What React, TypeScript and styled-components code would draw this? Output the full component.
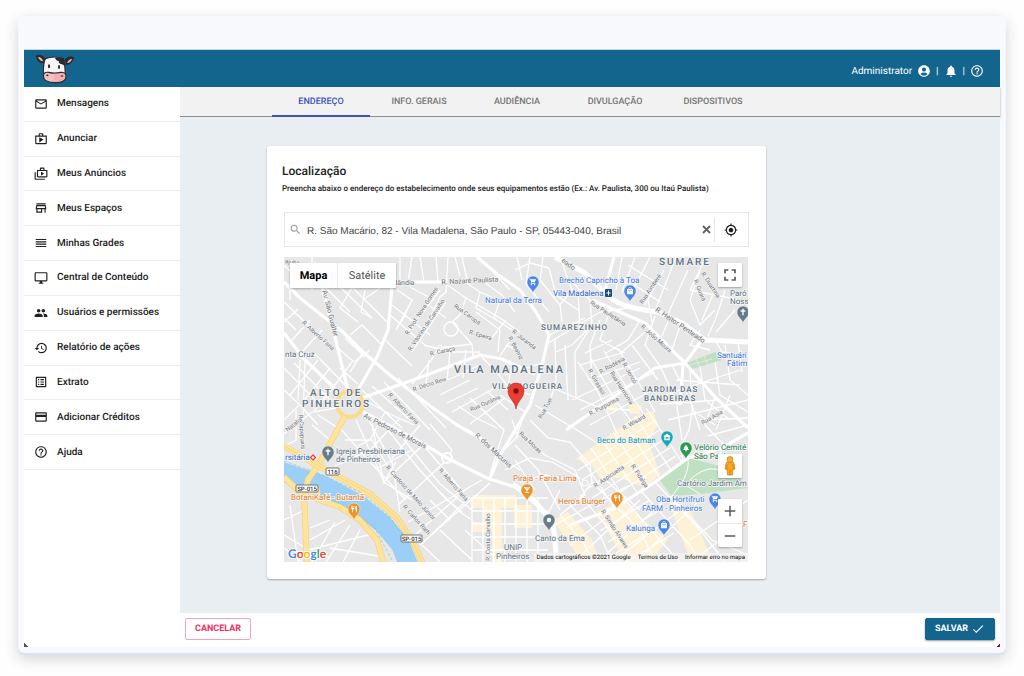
import React from "react";
import styled, { createGlobalStyle, css } from "styled-components";
import type { IconType } from "react-icons";
import {
  MdAccountCircle,
  MdAdd,
  MdDone,
  MdFullscreen,
  MdHelpOutline,
  MdHistory,
  MdLocalBar,
  MdLocalMall,
  MdMailOutline,
  MdMuseum,
  MdMyLocation,
  MdNotifications,
  MdOutlineDesktopWindows,
  MdOutlineListAlt,
  MdOutlineShop,
  MdOutlineShopTwo,
  MdOutlineStore,
  MdPark,
  MdPayment,
  MdPeople,
  MdRemove,
  MdReorder,
  MdRestaurant,
  MdSearch,
  MdShoppingCart,
} from "react-icons/md";

const blue = "#14658e";

const GlobalStyle = createGlobalStyle`
  *, *::before, *::after { box-sizing: border-box; }
  body {
    margin: 0;
    background: #fefefe;
    color: #212121;
    font-family: Roboto, "Liberation Sans", sans-serif;
    font-size: 10px;
    text-rendering: geometricPrecision;
  }
  button, input { font: inherit; color: inherit; text-rendering: inherit; }
  a { color: inherit; text-decoration: none; }
`;

/* ---------- shell ---------- */

const Page = styled.div`
  display: flex;
  min-height: 100vh;
  padding: 16px 18px 21px;
`;

const Frame = styled.div`
  display: flex;
  flex: 1;
  min-width: 0;
  padding: 34px 6px 8px;
  border-radius: 6px;
  background: #f7f9fc;
  box-shadow: inset 0 -2px 1px #d6e2f1, 0 4px 14px rgba(40, 40, 60, 0.2);
`;

const Shell = styled.div`
  position: relative;
  display: flex;
  flex: 1;
  flex-direction: column;
  min-width: 0;
  background: #fff;

  &::before,
  &::after {
    content: "";
    position: absolute;
    z-index: 2;
    bottom: 0;
    width: 4px;
    height: 4px;
  }
  &::before {
    left: 0;
    background: linear-gradient(45deg, #555 50%, transparent 50%);
  }
  &::after {
    right: 0;
    background: linear-gradient(-45deg, #7a2334 50%, transparent 50%);
  }
`;

const Header = styled.header`
  display: flex;
  align-items: center;
  justify-content: space-between;
  height: 37px;
  padding: 0 16px 0 11px;
  background: ${blue};
  box-shadow: 0 -1px 0 #c3d7e8;
  color: #fff;
`;

const Account = styled.div`
  display: flex;
  align-items: center;
  gap: 5px;
  padding-top: 5px;
`;

const IconButton = styled.button`
  display: flex;
  align-items: center;
  justify-content: center;
  padding: 0;
  border: 0;
  background: none;
  cursor: pointer;
`;

const AccountButton = styled(IconButton)`
  gap: 5px;
`;

const Body = styled.div`
  display: flex;
  flex: 1;
  min-height: 0;
`;

const Sidebar = styled.nav`
  position: relative;
  z-index: 1;
  flex: none;
  width: 156px;
  background: #fff;
`;

const Menu = styled.ul`
  display: grid;
  grid-auto-rows: 1fr;
  height: 383px;
  margin: 0;
  padding: 0;
  list-style: none;
`;

const MenuItem = styled.li`
  border-bottom: 1px solid #ececec;
`;

const MenuLink = styled.a`
  display: flex;
  align-items: center;
  gap: 9px;
  height: 100%;
  padding-left: 10px;
  font-weight: 500;
  white-space: nowrap;
`;

const Main = styled.main`
  display: flex;
  flex: 1;
  flex-direction: column;
  min-width: 0;
`;

const Tabs = styled.div`
  display: flex;
  height: 30px;
  padding: 0 92px;
  background: #f2f2f2;
  border-bottom: 1px solid #8d8d90;
  box-shadow: 0 1px 2px rgba(0, 0, 0, 0.35);
`;

const Tab = styled.button<{ $active?: boolean }>`
  width: 98px;
  height: 30px;
  padding: 2px 0 0;
  border: 0;
  border-bottom: 2px solid ${(p) => (p.$active ? "#3f51b5" : "transparent")};
  background: none;
  color: ${(p) => (p.$active ? "#3f51b5" : "#757575")};
  font-size: 9px;
  font-weight: 500;
  cursor: pointer;
`;

const Content = styled.div`
  flex: 1;
  padding: 29px 87px 33px;
  background: #e9eef2;
`;

const Card = styled.section`
  max-width: 499px;
  padding: 16px 15px 17px;
  border-radius: 3px;
  background: #fff;
  box-shadow: 0 1px 2px rgba(0, 0, 0, 0.3);
`;

const Title = styled.h1`
  margin: 0;
  font-size: 12px;
  font-weight: 500;
  line-height: 18px;
`;

const Hint = styled.p`
  margin: 3px 0 18px;
  font-size: 8px;
  font-weight: 500;
  line-height: 11px;
`;

const SearchBox = styled.div`
  display: flex;
  align-items: center;
  height: 35px;
  margin: 0 2px 10px;
  padding: 0 10px 0 4px;
  border: 1px solid #e6e6e6;
  color: #424242;
`;

const SearchInput = styled.input`
  flex: 1;
  min-width: 0;
  padding: 3px 0 0 5px;
  border: 0;
  outline: 0;
  background: none;
  font-family: "Liberation Sans", Arial, sans-serif;
  font-size: 10px;
`;

const LocateButton = styled(IconButton)`
  height: 24px;
  margin-left: 3px;
  padding-left: 9px;
  border-left: 1px solid #e6e6e6;
  color: #212121;
`;

const Footer = styled.footer`
  display: flex;
  align-items: flex-start;
  justify-content: space-between;
  height: 34px;
  padding: 5px 5px 0;
`;

const Action = styled.button<{ $primary?: boolean }>`
  display: flex;
  align-items: center;
  justify-content: center;
  gap: 3px;
  height: 22px;
  padding: 0 9px;
  border: 1px solid #f7a3bd;
  border-radius: 2px;
  background: #fff;
  color: #f02d65;
  font-size: 9px;
  font-weight: 700;
  cursor: pointer;
  ${(p) =>
    p.$primary &&
    css`
      border-color: ${blue};
      background: ${blue};
      color: #fff;
      box-shadow: 0 1px 2px rgba(0, 0, 0, 0.4);
    `}
`;

/* ---------- map ---------- */

const MapFrame = styled.div`
  position: relative;
  margin: 0 3px 0 2px;
  overflow: hidden;
`;

const MapSvg = styled.svg`
  display: block;
  width: 100%;
  height: auto;
  font-family: Roboto, sans-serif;
`;

const MapTypes = styled.div`
  position: absolute;
  top: 6px;
  left: 6px;
  display: flex;
  height: 25px;
  background: #fff;
  box-shadow: 0 1px 2px rgba(0, 0, 0, 0.3);
`;

const MapType = styled.button<{ $active?: boolean }>`
  width: ${(p) => (p.$active ? 48 : 58)}px;
  padding: 0;
  border: 0;
  border-right: ${(p) => (p.$active ? "1px solid #e6e6e6" : "0")};
  background: none;
  color: ${(p) => (p.$active ? "#000" : "#565656")};
  font-size: 11px;
  font-weight: ${(p) => (p.$active ? 700 : 400)};
  cursor: pointer;
`;

const MapControl = styled.div<{ $top?: number; $bottom?: number }>`
  position: absolute;
  right: 6px;
  ${(p) => (p.$top !== undefined ? `top: ${p.$top}px;` : `bottom: ${p.$bottom}px;`)}
  width: 24px;
  border-radius: 1px;
  background: #fff;
  box-shadow: 0 1px 2px rgba(0, 0, 0, 0.3);
  color: #5a5a5a;
`;

const ControlButton = styled(IconButton)`
  width: 24px;
  height: 24px;
  & + & {
    border-top: 1px solid #e6e6e6;
  }
`;

const Credits = styled.div`
  position: absolute;
  right: 0;
  bottom: 0;
  display: flex;
  gap: 7px;
  padding: 0 3px;
  background: rgba(245, 245, 245, 0.7);
  color: #000;
  font-size: 6px;
  line-height: 9px;
`;

/* Parallel streets: the first segment repeated n times at a fixed step. */
const rows = (
  x1: number, y1: number, x2: number, y2: number,
  dx: number, dy: number, n: number,
) =>
  Array.from({ length: n }, (_, i) =>
    `M${x1 + dx * i} ${y1 + dy * i}L${x2 + dx * i} ${y2 + dy * i}`,
  ).join("");

const minorStreets = [
  // north-west
  "M284 265L300 281L316 262M312 257V290M325 287L350 312M340 287L372 318M352 287L390 325",
  "M284 302L310 327L330 346M284 318L296 330M290 283V300M298 309L284 322M310 320L292 340M322 330L302 352",
  "M352 288L340 308L358 322M365 290L361 312L372 318M380 288L363 300M392 305L430 335M390 315L425 345M383 338L412 366",
  "M350 335L362 325L382 345M345 338L365 357M338 348L354 362L370 350M340 368L358 384M352 362L340 378M363 352L350 372",
  "M400 257V282M412 257L408 282M420 257L424 282M436 257L438 282M448 257L446 292L440 297L424 330L413 344M455 257L460 276",
  "M397 290L412 300L400 325M410 287L434 300M412 300L396 330M440 290L408 332M446 302L420 340L412 352M430 306L446 318",
  "M446 284L466 298L500 318L520 332M462 257L468 284L480 292L498 300M466 298L460 315L452 322M480 292L476 308L500 322",
  "M484 282L502 295L515 312M493 272L510 290M500 300L494 318L512 330M440 345L430 362L412 384M452 322L472 344L473 356",
  "M440 348L472 344M424 345L450 352L480 352M450 352L447 380M466 350L463 378M429 360L426 384M476 312L500 330L498 352",
  "M500 356L514 335M490 340L506 320M506 345L520 352M480 355L500 376L512 392M412 388L450 379L480 365M440 395L470 380M447 403L478 388M452 412L500 385M470 424L505 398",
  // west
  rows(284, 368, 320, 405, 10, -5, 4),
  rows(290, 395, 318, 360, 12, 8, 3),
  "M284 390L300 405L318 425M300 360L298 400M305 362L303 420M284 420L300 404M284 434L312 412L336 408M296 410V440L284 446M312 425L330 440M318 415L338 428",
  "M364 400L390 414L414 425M362 390L402 428M372 386L410 420M384 382L430 430M398 378L446 428M385 412L370 440L358 446M400 418L370 450L335 466M420 425L392 458",
  "M363 410L392 462L400 512M372 424L384 484M356 420L384 482L412 500M340 428L370 462L406 500M345 440L372 440L396 480L420 500M388 430L418 468L445 498L462 512M404 440L440 484L472 510M425 447L460 488",
  "M384 482L422 446M398 505L447 460M408 522L482 480M415 535L465 490M420 545L490 483M430 500L450 520M440 492L460 512M396 462L384 482M378 468L412 450M430 424L452 450L447 460",
  // centre
  "M500 358L520 370L535 375M512 365L508 385L530 395M505 375L545 362M500 395L525 412L520 426M488 392L508 410M470 398L504 430L490 474M458 406L476 418L497 428M520 426L516 438L498 456L490 478M518 438L512 420",
  "M515 270L530 263L549 268M517 257L522 280M530 257L526 284L549 312M543 257L540 280L560 305L562 322M549 268L556 295L578 310M549 335L585 318M545 345L600 312L628 308",
  "M560 257L572 290L560 305M572 282L590 300L592 325L572 345L556 352M578 290L580 330M555 340L556 380L550 402M565 345L568 400M592 325L575 352L576 400M600 320L590 345L592 380M610 310L600 340L622 352L645 332",
  "M622 257L616 290M635 257L622 292M650 257L630 296M664 270L645 305M676 257L656 308M688 270L668 314M628 265L668 290M624 278L660 302M700 270L690 300L700 325L715 310M706 257L690 290M715 290L702 320M725 290L716 318L708 336M690 290L740 300M735 310L716 332",
  "M640 320L628 340L606 353M655 316L645 345L660 366M668 322L660 340M680 326L672 350M648 300L652 322M585 353L612 340M580 365L625 352M588 380L640 362M578 362L598 392L620 440M590 357L615 400L632 422M604 351L628 390L645 416M618 348L640 385L655 412M632 345L658 380M572 400L640 368",
  "M580 410L655 372M590 425L660 386M546 385L600 408L630 410M660 366L676 400L682 440M672 365L690 400L700 430M690 369L692 410L715 425M700 366L705 400L730 420M715 362L720 395L748 412M725 345L730 380L748 395M738 342L742 372M660 404L720 400M668 420L748 400M715 397L705 425L725 446M730 395L716 430M676 380L740 385M665 395L740 370",
  "M693 405L689 430L680 448L683 460M700 420L748 418M708 436L748 425M722 448L716 468M700 330L690 345L710 350M715 340L722 352L748 356",
  // south centre
  "M520 432L545 455L575 470L585 495L560 515M515 445L538 470L560 510M530 420L548 438L570 442L590 465L592 482L575 505M535 405L560 420L580 432L600 445M515 460L535 490M520 482L545 475L570 480M505 470L530 458L552 462L580 478M545 520L560 490M555 525L600 500L640 480",
  "M592 482L640 530L655 562M580 495L625 548L630 562M570 505L600 535L612 562M560 515L585 545L592 562M570 545L610 515M580 556L640 500M600 560L665 500M620 556L680 510M642 556L700 500M625 500L665 546L680 562M640 490L690 545L700 562M655 482L700 530L725 562M670 496L712 540L748 555M600 475L640 510M690 540L748 500M700 555L748 520",
  // retail blocks
  rows(580, 456, 616, 510, 11, -8, 7),
  rows(577, 471, 656, 420, 5, 9, 5),
  rows(600, 531, 650, 500, 8, 11, 4),
  // south-west grid
  rows(472, 497, 472, 562, 11, 0, 7),
  rows(472, 498, 548, 498, 0, 13, 5),
  "M460 512L472 520M465 530L500 562M440 530L472 560M422 545L440 562M428 538L470 497M498 456L520 470",
  // south-west bank
  "M310 540L345 520M308 550L372 534M312 562L335 522M326 562L350 525M343 562L360 530M310 528L330 520M284 520L305 510M284 535L306 548M290 505L298 562M284 548L302 562M330 548L378 556",
];

const mainStreets = [
  "M284 282L300 298L343 332L363 352L390 375L413 393L433 408L457 425L480 438L512 468",
  "M284 333L305 360L343 396",
  "M322 287L335 337L348 390",
  "M392 287L388 330L377 357L358 390",
  "M363 412L413 438L447 458L487 478L518 488L535 502L553 522L557 562",
  "M362 398L413 380L480 355L502 359L530 372",
  "M397 282H443",
  "M477 257L497 274L520 290L536 312L549 335L542 365L530 405L514 432L500 455L490 478",
  "M614 257L605 290",
  "M592 300L645 323L685 363L715 397L748 428",
  "M702 340L685 363L655 368L606 402L566 430",
  "M683 365L680 405",
  "M748 433L722 448L688 458L655 482L615 508L570 525",
];

const retailAreas = [
  "M576 459L636 416L653 411L658 425L648 440L660 474L645 488L620 478L600 478L592 466Z",
  "M597 512L622 500L646 522L668 540L650 562L625 562Z",
  "M553 520L568 512L592 540L600 562H582Z",
  "M472 495H516V508H502V562H492V532H472V522H484V508H472Z",
  "M514 505H532V528H514Z",
  "M604 403L616 398L618 410L608 412Z",
  "M628 402L642 406L640 414L630 414Z",
  "M668 500L690 508L712 560H690Z",
];

type StreetLabel = [text: string, x: number, y: number, angle: number, size?: number];

const streetLabels: StreetLabel[] = [
  ["ajuba", 292, 264, 8, 6],
  ["lândia", 405, 285, 0, 7],
  ["R. Nazaré Paulista", 470, 283, -3, 7],
  ["Av. São Gualter", 328, 314, 76, 7],
  ["R. Alberto Faria", 317, 337, 42, 6],
  ["R. Prof. Nova Gomes", 423, 312, -57, 6],
  ["R. Vitorino de Carvalho", 428, 326, -56, 6],
  ["Rua Caropá", 466, 316, 36, 6],
  ["R. Epeira", 480, 337, 16, 6],
  ["R. Juranda", 523, 341, 38, 6],
  ["R. Beatriz", 514, 349, 62, 6],
  ["R. Caraça", 443, 353, -12, 6],
  ["R. Décio Reis", 430, 386, -18, 6],
  ["Rua Ourânia", 486, 405, -24, 6],
  ["R. Alberto Faria", 402, 410, 46, 6],
  ["Av. Pedroso de Morais", 394, 433, 27, 7],
  ["R. dos Macunis", 492, 452, 43, 7],
  ["R. Cardoso de Melo Júnior", 409, 494, 48, 6],
  ["R. Carlos Rath", 415, 521, 48, 6],
  ["R. Alberto Faria", 452, 486, 49, 6],
  ["R. Capepuxis", 300, 432, 86, 6],
  ["Natalia", 295, 426, -38, 6],
  ["R. Costa Carvalho", 490, 537, -90, 6],
  ["Rua Moras", 529, 444, 44, 6],
  ["Rua Tuei", 547, 409, -62, 6],
  ["R. Purpurina", 605, 408, -28, 6],
  ["R. Wisard", 635, 424, -30, 6],
  ["R. Aspicuelta", 610, 478, -34, 6],
  ["R. Fidalga", 638, 477, 56, 6],
  ["R. Simão Álvares", 613, 530, 57, 6],
  ["R. Girassol", 595, 383, 60, 6],
  ["R. Rodésia", 613, 367, -30, 6],
  ["R. Jericó", 628, 374, 60, 6],
  ["Rua Harmonia", 620, 389, 57, 6],
  ["R. João Moura", 655, 340, 42, 6],
  ["Rua Paulistânia", 607, 315, 33, 6],
  ["R. Heitor Penteado", 679, 327, 34, 7],
  ["Rua Aimberê", 652, 290, -56, 6],
  ["R. Guará", 698, 291, 68, 6],
  ["R. Duartina", 709, 286, 57, 6],
  ["Rua Asia", 713, 419, -30, 6],
  ["eado", 567, 266, 38, 7],
];

const slate = "#5d7182";
const placeBlue = "#3a78e0";
const orange = "#e27a20";

type Place = [text: string, x: number, y: number, color: string];

const places: Place[] = [
  ["Natural da Terra", 485, 303, placeBlue],
  ["Brechó Capricho à Toa", 559, 283, placeBlue],
  ["Vila Madalena", 553, 296, "#2965cc"],
  ["Beco do Batman", 597, 443, "#1295a5"],
  ["Velório Cemité", 694, 450, "#20824a"],
  ["São Paulo", 694, 459, "#20824a"],
  ["Pirajá - Faria Lima", 513, 481, orange],
  ["Hero's Burger", 558, 504, orange],
  ["Oba Hortifruti", 656, 502, placeBlue],
  ["FARM - Pinheiros", 642, 511, placeBlue],
  ["Kalunga", 626, 531, placeBlue],
  ["Canto da Ema", 535, 541, slate],
  ["UNIP", 504, 550, slate],
  ["Pinheiros", 496, 559, slate],
  ["Cartório Jardim Am", 677, 486, slate],
  ["Igreja Presbiteriana", 336, 454, slate],
  ["de Pinheiros", 336, 462, slate],
  ["rsitária", 285, 460, "#2965cc"],
  ["BotaniKafé - Butantã", 291, 500, orange],
  ["nta Cruz", 285, 357, slate],
  ["Paró", 730, 296, slate],
  ["Noss", 730, 304, slate],
  ["Santuári", 717, 358, placeBlue],
  ["Fátim", 727, 366, placeBlue],
  ["F", 743, 527, orange],
];

type District = [text: string, x: number, y: number, size: number, spacing: number];

const districts: District[] = [
  ["SUMARE", 659, 265, 10, 2],
  ["SUMAREZINHO", 541, 330, 8, 1],
  ["VILA MADALENA", 454, 373, 11, 2],
  ["VILA NOGUEIRA", 492, 389, 8, 1],
  ["ALTO DE", 310, 396, 10, 2],
  ["PINHEIROS", 302, 407, 10, 2],
  ["JARDIM DAS", 642, 392, 8, 1],
  ["BANDEIRAS", 644, 401, 8, 1],
];

function Cross({ x, y, size, color }: { x?: number; y?: number; size?: number; color?: string }) {
  return (
    <svg x={x} y={y} width={size} height={size} viewBox="0 0 24 24">
      <path d="M12 2V22M5 9H19" stroke={color} strokeWidth="4" />
    </svg>
  );
}

type PinSpec = [x: number, y: number, color: string, icon?: IconType | typeof Cross];

const pins: PinSpec[] = [
  [533, 283, "#4a86e8", MdShoppingCart],
  [630, 292, "#4a86e8", MdLocalMall],
  [743, 313, "#677c8a", Cross],
  [667, 438, "#16a6b8", MdMuseum],
  [686, 449, "#2b9a50", MdPark],
  [328, 453, "#677c8a", Cross],
  [527, 491, "#f0922c", MdLocalBar],
  [617, 499, "#f0922c", MdRestaurant],
  [354, 510, "#f0922c", MdRestaurant],
  [549, 521, "#677c8a"],
  [664, 526, "#4a86e8", MdLocalMall],
  [715, 500, "#4a86e8", MdShoppingCart],
];

function Pin({ spec: [x, y, color, Icon] }: { spec: PinSpec }) {
  return (
    <g>
      <path
        d={`M${x} ${y + 10}C${x - 1} ${y + 6} ${x - 6} ${y + 4} ${x - 6} ${y - 1}A6 6 0 0 1 ${x + 6} ${y - 1}C${x + 6} ${y + 4} ${x + 1} ${y + 6} ${x} ${y + 10}Z`}
        fill={color}
        stroke="#fff"
        strokeWidth=".4"
      />
      {Icon ? (
        <Icon x={x - 4} y={y - 5} size={8} color="#fff" />
      ) : (
        <circle cx={x} cy={y - 1} r="2.2" fill="#fff" />
      )}
    </g>
  );
}

function Shield({ x, y, w, text }: { x: number; y: number; w: number; text: string }) {
  return (
    <g>
      <rect x={x} y={y} width={w} height="7" rx="1" fill="#fff" stroke="#555" strokeWidth=".8" />
      <text x={x + w / 2} y={y + 6} fontSize="6" fontWeight="500" textAnchor="middle" fill="#333">
        {text}
      </text>
    </g>
  );
}

function StreetMap() {
  const upperHighway = "M284 446L317 465L370 494L397 518L413 542L423 564";
  const lowerHighway = "M284 477L302 494L340 507L360 520L377 540L384 564";
  const bridge = "M345 416L320 462L308 480L304 494L307 564";
  return (
    <MapSvg viewBox="284 257 464 305" role="img" aria-label="Mapa de Vila Madalena">
      <rect x="284" y="257" width="464" height="305" fill="#e7e7e8" />
      {retailAreas.map((d) => (
        <path key={d} d={d} fill="#fdf2d5" />
      ))}
      <path d={minorStreets.join("")} fill="none" stroke="#fff" strokeWidth="1.3" />
      <path d="M658 478L688 458L720 466L740 478L748 488L700 494L672 496Z" fill="#bfe0c2" />
      <path d="M688 458C690 475 680 485 672 496M690 480C705 466 715 466 735 476M684 484L700 494" fill="none" stroke="#fff" />
      <path d="M687 363L715 352L722 360L692 369Z" fill="#bfe0c2" />
      <path d="M696 358L700 369M704 355L708 366M690 365L712 359" stroke="#e7e7e8" />
      <circle cx="451" cy="329" r="7" fill="none" stroke="#fff" strokeWidth="1.3" />
      <circle cx="447" cy="458" r="5" fill="#e7e7e8" stroke="#fff" strokeWidth="2" />
      <circle cx="440" cy="347" r="2" fill="#e7e7e8" stroke="#fff" />
      <circle cx="585" cy="483" r="3" fill="#e7e7e8" stroke="#fff" />
      <g fill="none" strokeLinejoin="round">
        <path d={mainStreets.join("")} stroke="#fff" strokeWidth="3.2" />
        <path
          d="M555 257L585 273L605 293C616 304 628 308 658 312L682 323L705 340L748 342"
          stroke="#fff"
          strokeWidth="5"
        />
        <path d="M513 484L535 502L553 522L557 562" stroke="#fff" strokeWidth="5" />
        <path d="M280 471L320 484L357 503L383 524L400 544L409 566" stroke="#9ccff8" strokeWidth="19" />
        <path d="M284 461L318 473L362 493L390 517L410 545" stroke="#7fc4a0" strokeWidth=".6" strokeDasharray="3 2" />
        <path d="M290 484L312 492L350 508L374 527L392 560" stroke="#7fc4a0" strokeWidth=".6" strokeDasharray="3 2" />
        <circle cx="350" cy="404" r="13" stroke="#fbdc84" strokeWidth="4" />
        {[bridge, lowerHighway, upperHighway].map((d) => (
          <g key={d}>
            <path d={d} stroke="#f7cf6b" strokeWidth="6" />
            <path d={d} stroke="#fde39b" strokeWidth="5" />
          </g>
        ))}
        <path d={upperHighway} stroke="#f4cd6d" strokeWidth=".6" />
        <path d="M302 494C310 506 322 496 318 488" stroke="#fbdc84" strokeWidth="3" />
      </g>

      <g fill="#6d7276" stroke="#f3f3f3" strokeWidth="1.4" paintOrder="stroke" textAnchor="middle">
        {streetLabels.map(([text, x, y, angle, size]) => (
          <text key={`${text}${x}`} x={x} y={y} fontSize={size} transform={`rotate(${angle} ${x} ${y})`}>
            {text}
          </text>
        ))}
      </g>
      <g fill={slate} stroke="#f3f3f3" strokeWidth="1.6" paintOrder="stroke" fontWeight="500">
        {districts.map(([text, x, y, size, spacing]) => (
          <text key={text} x={x} y={y} fontSize={size} letterSpacing={spacing}>
            {text}
          </text>
        ))}
      </g>
      <g stroke="#f6f6f6" strokeWidth="1.6" paintOrder="stroke" fontSize="8">
        {places.map(([text, x, y, color]) => (
          <text key={text} x={x} y={y} fill={color}>
            {text}
          </text>
        ))}
      </g>
      {pins.map((spec) => (
        <Pin key={`${spec[0]}-${spec[1]}`} spec={spec} />
      ))}

      <rect x="605" y="289" width="7" height="8" rx="1" fill="#164c92" />
      <path d="M608.500 290.500V295.500M606.500 293H610.500" stroke="#fff" />
      <path d="M313 455L315.500 457.500L313 460L310.500 457.500Z" fill="#fff" stroke="#e53935" strokeWidth="1.2" />
      <Shield x={326} y={468} w={13} text="116" />
      <Shield x={296} y={485} w={22} text="SP-015" />
      <Shield x={401} y={535} w={21} text="SP-015" />

      <path
        d="M516 409C515 401 508 398 508 391A8 8 0 0 1 524 391C524 398 517 401 516 409Z"
        fill="#ea3d33"
        stroke="#c0281f"
        strokeWidth=".6"
      />
      <circle cx="516" cy="391" r="2.700" fill="#7d120d" />

      <text
        x="288"
        y="558"
        fontSize="12"
        fontFamily="Lato, sans-serif"
        fontWeight="700"
        stroke="#fff"
        strokeWidth="2"
        paintOrder="stroke"
      >
        <tspan fill="#4285f4">G</tspan>
        <tspan fill="#ea4335">o</tspan>
        <tspan fill="#fbbc05">o</tspan>
        <tspan fill="#4285f4">g</tspan>
        <tspan fill="#34a853">l</tspan>
        <tspan fill="#ea4335">e</tspan>
      </text>
    </MapSvg>
  );
}

function Pegman() {
  return (
    <svg width="12" height="20" viewBox="0 0 12 20" aria-hidden="true">
      <path d="M2 8Q2 6 4 6H8Q10 6 10 8L11 13L9 13.500L8.500 19H3.500L3 13.500L1 13Z" fill="#f5a623" stroke="#c77f13" strokeWidth=".7" />
      <path d="M6 13V19M3 8V13M9 8V13" stroke="#c77f13" strokeWidth=".7" />
      <circle cx="6" cy="3.500" r="3" fill="#f7ae31" stroke="#c77f13" strokeWidth=".7" />
    </svg>
  );
}

function ClearIcon() {
  return (
    <svg width="9" height="9" viewBox="0 0 9 9" aria-hidden="true">
      <path d="M1 1L8 8M8 1L1 8" stroke="#616161" strokeWidth="1.800" />
    </svg>
  );
}

function CowLogo() {
  return (
    <svg width="39" height="30" viewBox="103 166 117 90" role="img" aria-label="Logo">
      <g stroke="#2b2a2e" strokeWidth="3.500" strokeLinejoin="round">
        <path d="M107 172Q122 166 133 182L129 193Q112 192 107 172Z" fill="#2b2a2e" />
        <path d="M112 175Q123 175 128 188Q116 187 112 175Z" fill="#f3b8b6" stroke="none" />
        <path d="M218 177Q206 171 195 182L197 197Q213 197 218 177Z" fill="#2b2a2e" />
        <path d="M214 180Q203 182 199 193Q210 193 214 180Z" fill="#f3b8b6" stroke="none" />
        <path d="M134 180Q160 170 188 180Q192 186 194 226L128 224Q128 190 134 180Z" fill="#f6f6f7" />
        <path d="M128 232Q128 219 144 221Q162 226 180 221Q197 220 196 234Q195 252 163 252Q129 252 128 232Z" fill="#f6bfc2" />
      </g>
      <path d="M163 177L189 179L194 204Q185 194 180 196Q173 194 174 187Q165 186 163 177Z" fill="#2b2a2e" />
      <path d="M160 224Q178 224 190 222Q196 234 190 243Q180 250 160 250Z" fill="#ee9fa6" opacity=".5" />
      <ellipse cx="145" cy="203" rx="3" ry="6" fill="#222" />
      <ellipse cx="175" cy="205" rx="3" ry="6" fill="#222" />
      <ellipse cx="140" cy="230" rx="4" ry="2.500" fill="#333" />
      <ellipse cx="184" cy="232" rx="4" ry="2.500" fill="#333" />
    </svg>
  );
}

const menu: [string, IconType][] = [
  ["Mensagens", MdMailOutline],
  ["Anunciar", MdOutlineShop],
  ["Meus Anúncios", MdOutlineShopTwo],
  ["Meus Espaços", MdOutlineStore],
  ["Minhas Grades", MdReorder],
  ["Central de Conteúdo", MdOutlineDesktopWindows],
  ["Usuários e permissões", MdPeople],
  ["Relatório de ações", MdHistory],
  ["Extrato", MdOutlineListAlt],
  ["Adicionar Créditos", MdPayment],
  ["Ajuda", MdHelpOutline],
];

const tabs = ["ENDEREÇO", "INFO. GERAIS", "AUDIÊNCIA", "DIVULGAÇÃO", "DISPOSITIVOS"];

export default function App() {
  return (
    <>
      <GlobalStyle />
      <Page>
        <Frame>
          <Shell>
            <Header>
              <CowLogo />
              <Account>
                <AccountButton type="button">
                  Administrator <MdAccountCircle size={14} />
                </AccountButton>
                <span>|</span>
                <IconButton type="button" aria-label="Notificações">
                  <MdNotifications size={14} />
                </IconButton>
                <span>|</span>
                <IconButton type="button" aria-label="Ajuda">
                  <MdHelpOutline size={14} />
                </IconButton>
              </Account>
            </Header>
            <Body>
              <Sidebar>
                <Menu>
                  {menu.map(([label, Icon]) => (
                    <MenuItem key={label}>
                      <MenuLink href="#">
                        <Icon size={14} />
                        {label}
                      </MenuLink>
                    </MenuItem>
                  ))}
                </Menu>
              </Sidebar>
              <Main>
                <Tabs role="tablist">
                  {tabs.map((label, i) => (
                    <Tab key={label} type="button" role="tab" aria-selected={i === 0} $active={i === 0}>
                      {label}
                    </Tab>
                  ))}
                </Tabs>
                <Content>
                  <Card>
                    <Title>Localização</Title>
                    <Hint>
                      Preencha abaixo o endereço do estabelecimento onde seus equipamentos estão (Ex.: Av.
                      Paulista, 300 ou Itaú Paulista)
                    </Hint>
                    <SearchBox>
                      <MdSearch size={13} color="#9e9e9e" />
                      <SearchInput
                        aria-label="Endereço"
                        defaultValue="R. São Macário, 82 - Vila Madalena, São Paulo - SP, 05443-040, Brasil"
                      />
                      <IconButton type="button" aria-label="Limpar">
                        <ClearIcon />
                      </IconButton>
                      <LocateButton type="button" aria-label="Usar minha localização">
                        <MdMyLocation size={14} />
                      </LocateButton>
                    </SearchBox>
                    <MapFrame>
                      <StreetMap />
                      <MapTypes>
                        <MapType type="button" $active>
                          Mapa
                        </MapType>
                        <MapType type="button">Satélite</MapType>
                      </MapTypes>
                      <MapControl $top={6}>
                        <ControlButton type="button" aria-label="Tela cheia">
                          <MdFullscreen size={20} />
                        </ControlButton>
                      </MapControl>
                      <MapControl $bottom={84}>
                        <ControlButton type="button" aria-label="Street View">
                          <Pegman />
                        </ControlButton>
                      </MapControl>
                      <MapControl $bottom={15}>
                        <ControlButton type="button" aria-label="Aumentar zoom">
                          <MdAdd size={18} />
                        </ControlButton>
                        <ControlButton type="button" aria-label="Diminuir zoom">
                          <MdRemove size={18} />
                        </ControlButton>
                      </MapControl>
                      <Credits>
                        <span>Dados cartográficos ©2021 Google</span>
                        <a href="#">Termos de Uso</a>
                        <a href="#">Informar erro no mapa</a>
                      </Credits>
                    </MapFrame>
                  </Card>
                </Content>
                <Footer>
                  <Action type="button">CANCELAR</Action>
                  <Action type="button" $primary>
                    SALVAR <MdDone size={14} />
                  </Action>
                </Footer>
              </Main>
            </Body>
          </Shell>
        </Frame>
      </Page>
    </>
  );
}
